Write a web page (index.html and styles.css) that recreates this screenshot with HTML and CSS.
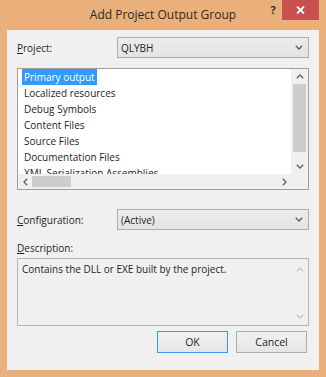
FILE: index.html
```html
<!DOCTYPE html>
<html lang="en">
<head>
    <meta charset="UTF-8">
    <title>Add Project Output Group</title>
    <link rel="stylesheet" href="styles.css">
</head>
<body>
    <div class="window">
        <div class="titlebar">
            <div class="title-spacer"></div>
            <div class="title">Add Project Output Group</div>
            <div class="caption-buttons">
                <span class="help">?</span>
                <span class="close">
                    <svg width="9" height="8" viewBox="0 0 9 8"><path d="M1 0.5 L8 7.5 M8 0.5 L1 7.5" stroke="#fff" stroke-width="1.8"/></svg>
                </span>
            </div>
        </div>
        <div class="client">
            <div class="field-row">
                <div class="label"><u>P</u>roject:</div>
                <div class="combo">
                    <span class="combo-text">QLYBH</span>
                    <svg class="chev" width="8" height="5" viewBox="0 0 8 5"><polyline points="0.8,0.8 4,4 7.2,0.8" fill="none" stroke="#5a5a5a" stroke-width="1.3"/></svg>
                </div>
            </div>

            <div class="listbox">
                <div class="list-main">
                    <ul class="items">
                        <li><span class="selected">Primary output</span></li>
                        <li><span>Localized resources</span></li>
                        <li><span>Debug Symbols</span></li>
                        <li><span>Content Files</span></li>
                        <li><span>Source Files</span></li>
                        <li><span>Documentation Files</span></li>
                        <li><span>XML Serialization Assemblies</span></li>
                    </ul>
                    <div class="vscroll">
                        <div class="arrow"><svg width="8" height="5" viewBox="0 0 8 5"><polyline points="0.8,4.2 4,1 7.2,4.2" fill="none" stroke="#606060" stroke-width="1.3"/></svg></div>
                        <div class="vtrack"><div class="vthumb"></div></div>
                        <div class="arrow"><svg width="8" height="5" viewBox="0 0 8 5"><polyline points="0.8,0.8 4,4 7.2,0.8" fill="none" stroke="#606060" stroke-width="1.3"/></svg></div>
                    </div>
                </div>
                <div class="hscroll-row">
                    <div class="hscroll">
                        <div class="arrow-h"><svg width="5" height="8" viewBox="0 0 5 8"><polyline points="4.2,0.8 1,4 4.2,7.2" fill="none" stroke="#606060" stroke-width="1.3"/></svg></div>
                        <div class="htrack"><div class="hthumb"></div></div>
                        <div class="arrow-h"><svg width="5" height="8" viewBox="0 0 5 8"><polyline points="0.8,0.8 4,4 0.8,7.2" fill="none" stroke="#606060" stroke-width="1.3"/></svg></div>
                    </div>
                    <div class="corner"></div>
                </div>
            </div>

            <div class="field-row config-row">
                <div class="label"><u>C</u>onfiguration:</div>
                <div class="combo">
                    <span class="combo-text">(Active)</span>
                    <svg class="chev" width="8" height="5" viewBox="0 0 8 5"><polyline points="0.8,0.8 4,4 7.2,0.8" fill="none" stroke="#5a5a5a" stroke-width="1.3"/></svg>
                </div>
            </div>

            <div class="label desc-label"><u>D</u>escription:</div>
            <div class="textbox">
                <div class="textbox-text">Contains the DLL or EXE built by the project.</div>
                <div class="textbox-scroll">
                    <svg width="8" height="5" viewBox="0 0 8 5"><polyline points="0.8,4.2 4,1 7.2,4.2" fill="none" stroke="#c4c4c4" stroke-width="1.3"/></svg>
                    <svg width="8" height="5" viewBox="0 0 8 5"><polyline points="0.8,0.8 4,4 7.2,0.8" fill="none" stroke="#c4c4c4" stroke-width="1.3"/></svg>
                </div>
            </div>

            <div class="buttons">
                <button class="btn btn-default">OK</button>
                <button class="btn">Cancel</button>
            </div>
        </div>
    </div>
</body>
</html>
```

FILE: styles.css
```css
body{
    margin: 0;
    font-family: "Open Sans", "Noto Sans", sans-serif;
    font-size: 10px;
    color: #1e1e1e;
}
.window{
    width: 326px;
    height: 377px;
    background-color: #e9b07b;
    display: flex;
    flex-direction: column;
}
.titlebar{
    height: 30px;
    display: flex;
    align-items: flex-start;
}
.title-spacer{
    width: 62px;
}
.title{
    flex: 1;
    text-align: center;
    font-size: 12px;
    line-height: 29px;
    color: #2a2a2a;
}
.caption-buttons{
    width: 62px;
    display: flex;
    align-items: flex-start;
}
.help{
    width: 18px;
    text-align: center;
    font-weight: bold;
    font-size: 11px;
    line-height: 20px;
    color: #333;
}
.close{
    width: 37px;
    height: 20px;
    background-color: #c75050;
    display: flex;
    justify-content: center;
    align-items: center;
}
.client{
    margin: 0 7px;
    height: 340px;
    background-color: #f0f0f0;
    padding: 7px 10px 0 10px;
    box-sizing: border-box;
}
.field-row{
    display: flex;
    align-items: center;
    height: 21px;
}
.label{
    width: 100px;
    line-height: 14px;
}
.combo{
    flex: 1;
    height: 21px;
    box-sizing: border-box;
    border: 1px solid #acacac;
    background: linear-gradient(#ececec, #e3e3e3);
    display: flex;
    align-items: center;
    padding: 0 5px 0 3px;
}
.combo-text{
    flex: 1;
}
.listbox{
    margin-top: 10px;
    height: 122px;
    box-sizing: border-box;
    border: 1px solid #9f9f9f;
    background-color: #fff;
    display: flex;
    flex-direction: column;
}
.list-main{
    flex: 1;
    display: flex;
    overflow: hidden;
}
.items{
    flex: 1;
    list-style: none;
    margin: 0;
    padding: 0 0 0 4px;
    overflow: hidden;
}
.items li{
    height: 16px;
    line-height: 16px;
    white-space: nowrap;
}
.items span{
    padding: 0 2px;
    display: inline-block;
}
.items .selected{
    background-color: #3399ff;
    color: #fff;
}
.vscroll{
    width: 17px;
    background-color: #f0f0f0;
    display: flex;
    flex-direction: column;
}
.arrow{
    height: 15px;
    display: flex;
    justify-content: center;
    align-items: center;
}
.vtrack{
    flex: 1;
    padding: 0 2px;
}
.vthumb{
    height: 68px;
    background-color: #cdcdcd;
}
.hscroll-row{
    height: 15px;
    display: flex;
}
.hscroll{
    flex: 1;
    background-color: #f0f0f0;
    display: flex;
}
.arrow-h{
    width: 14px;
    display: flex;
    justify-content: center;
    align-items: center;
}
.htrack{
    flex: 1;
    padding: 2px 0;
}
.hthumb{
    width: 39px;
    height: 100%;
    background-color: #cdcdcd;
}
.corner{
    width: 17px;
    background-color: #f0f0f0;
}
.config-row{
    margin-top: 19px;
}
.desc-label{
    margin-top: 11px;
}
.textbox{
    margin-top: 3px;
    height: 68px;
    box-sizing: border-box;
    border: 1px solid #b5b5b5;
    background-color: #f0f0f0;
    display: flex;
}
.textbox-text{
    flex: 1;
    padding: 3px 4px;
    line-height: 14px;
}
.textbox-scroll{
    width: 17px;
    display: flex;
    flex-direction: column;
    justify-content: space-between;
    align-items: center;
    padding: 8px 0 6px;
}
.buttons{
    margin-top: 5px;
    display: flex;
    justify-content: flex-end;
    gap: 8px;
    padding-right: 2px;
}
.btn{
    width: 71px;
    height: 22px;
    font-family: inherit;
    font-size: 10.5px;
    color: #1e1e1e;
    border: 1px solid #acacac;
    background: linear-gradient(#f0f0f0, #e5e5e5);
    padding: 0;
}
.btn-default{
    border-color: #3399ff;
}
```
